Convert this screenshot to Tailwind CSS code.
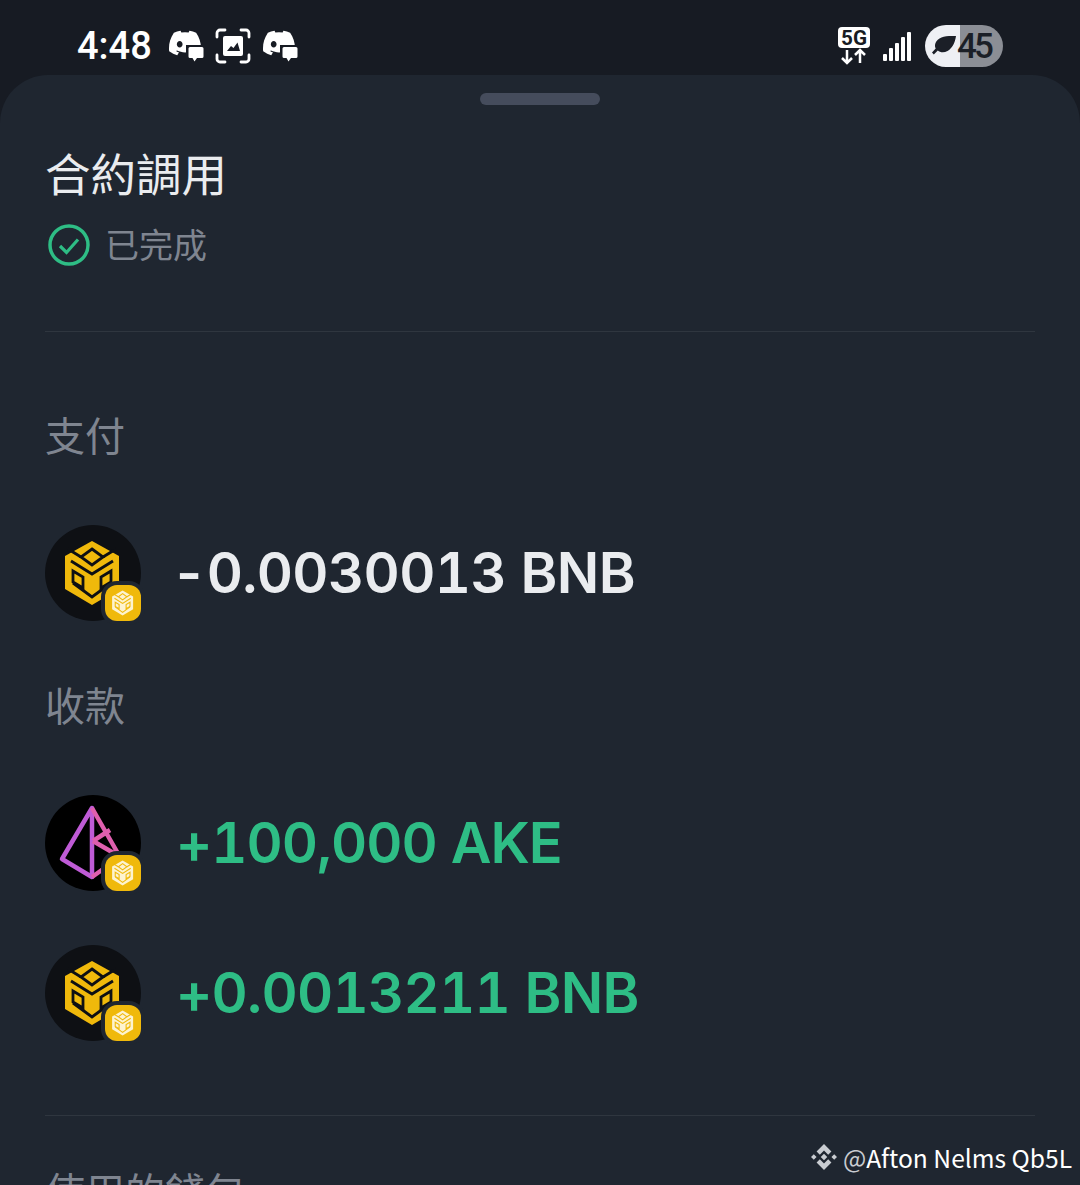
<!DOCTYPE html>
<html lang="zh-Hant">
<head>
  <meta charset="UTF-8">
  <title>合約調用</title>
  <script src="https://cdn.jsdelivr.net/npm/@tailwindcss/browser@4"></script>
</head>
<body class="bg-[#171b23] font-['Inter','Noto_Sans_CJK_TC',sans-serif]">
  <!-- shared icons -->
  <svg class="hidden">
    <symbol id="bnb" viewBox="0 0 66 72">
      <path fill="currentColor" d="M32 4 59 19V52L32 68 5 52V19Z"/>
      <g fill="none" stroke="var(--line)" stroke-width="2.800">
        <path d="M32 12 43 20 32 28 21 20Z"/>
        <path d="M11 24 32 37 53 24"/>
        <path d="M21 20 8 12M43 20 56 12"/>
        <path d="M13 34 23 40V51L13 45Z"/>
        <path d="M51 34 41 40V51L51 45Z"/>
        <path d="M13 46 32 60 51 46"/>
      </g>
    </symbol>
    <symbol id="discord" viewBox="0 0 35 32">
      <svg x="0" y="-3" width="32" height="32" viewBox="0 0 24 24"><path fill="currentColor" d="M20.317 4.37a19.79 19.79 0 0 0-4.885-1.515.07.07 0 0 0-.079.037c-.211.375-.445.865-.608 1.25a18.27 18.27 0 0 0-5.487 0 12.640 12.640 0 0 0-.618-1.25.08.08 0 0 0-.079-.037A19.740 19.740 0 0 0 3.677 4.370a.07.07 0 0 0-.032.028C.533 9.046-.319 13.580.099 18.058a.08.08 0 0 0 .031.056c2.053 1.508 4.041 2.423 5.993 3.030a.08.08 0 0 0 .084-.028c.462-.630.873-1.295 1.226-1.994a.08.08 0 0 0-.042-.106c-.653-.248-1.274-.550-1.872-.892a.08.08 0 0 1-.008-.128c.126-.094.252-.192.372-.291a.07.07 0 0 1 .078-.011c3.928 1.793 8.180 1.793 12.061 0a.07.07 0 0 1 .079.010c.120.099.246.198.373.292a.08.08 0 0 1-.007.128c-.598.350-1.219.645-1.873.891a.08.08 0 0 0-.041.107c.360.698.772 1.363 1.225 1.993a.08.08 0 0 0 .084.029c1.961-.607 3.950-1.522 6.002-3.030a.08.08 0 0 0 .032-.055c.500-5.177-.838-9.674-3.549-13.660a.06.06 0 0 0-.031-.029ZM8.020 15.331c-1.183 0-2.157-1.086-2.157-2.419s.956-2.419 2.157-2.419c1.211 0 2.176 1.095 2.157 2.419 0 1.333-.956 2.419-2.157 2.419Z"/></svg>
      <path fill="#171b23" d="M17 15h18v17H17z"/>
      <path fill="currentColor" d="M21 17h12a1.500 1.500 0 0 1 1.500 1.500v8a1.500 1.500 0 0 1-1.500 1.500h-5l-2.500 3.500-2-3.500H21a1.500 1.500 0 0 1-1.500-1.500v-8A1.500 1.500 0 0 1 21 17Z"/>
    </symbol>
  </svg>

  <div class="relative h-[1185px] w-[1080px] overflow-hidden">
    <!-- status bar -->
    <div class="flex h-[75px] items-center pl-[77px] pr-[77px] pt-[17px] text-white">
      <span class="w-[92px] text-[38px] font-medium leading-none font-['Roboto',sans-serif]">4:48</span>
      <svg class="h-[32px] w-[35px]"><use href="#discord"/></svg>
      <svg class="ml-[11px] h-[36px] w-[36px]" viewBox="0 0 36 36" fill="none" stroke="currentColor" stroke-width="2.800" stroke-linecap="round">
        <path d="M2 9V5a3 3 0 0 1 3-3h5M26 2h5a3 3 0 0 1 3 3v4M34 27v4a3 3 0 0 1-3 3h-5M10 34H5a3 3 0 0 1-3-3v-4"/>
        <path fill="currentColor" stroke="none" d="M10 8h16a2 2 0 0 1 2 2v16a2 2 0 0 1-2 2H10a2 2 0 0 1-2-2V10a2 2 0 0 1 2-2Z"/>
        <path fill="#171b23" stroke="none" d="M12 23l4-5 2.500 2 4-5.500 2.500 8.500Z"/>
      </svg>
      <svg class="ml-[12px] h-[32px] w-[35px]"><use href="#discord"/></svg>

      <svg class="ml-auto h-[38px] w-[34px]" viewBox="0 0 34 38">
        <rect x="1" y="0" width="32" height="21" rx="4" fill="#fff"/>
        <text x="17" y="18" text-anchor="middle" font-size="21" font-weight="700" fill="#171b23" font-family="Roboto, sans-serif" textLength="26" lengthAdjust="spacingAndGlyphs">5G</text>
        <path fill="none" stroke="#fff" stroke-width="2.500" d="M10 23v13M5 31l5 5 5-5M23 36V23M18 28l5-5 5 5"/>
      </svg>
      <div class="ml-[12px] flex h-[30px] items-end gap-[2px]">
        <i class="h-[7px] w-[4px] rounded-[1px] bg-white"></i>
        <i class="h-[13px] w-[4px] rounded-[1px] bg-white"></i>
        <i class="h-[18px] w-[4px] rounded-[1px] bg-white"></i>
        <i class="h-[24px] w-[4px] rounded-[1px] bg-white"></i>
        <i class="h-[29px] w-[4px] rounded-[1px] bg-white"></i>
      </div>
      <div class="ml-[14px] flex h-[42px] w-[78px] overflow-hidden rounded-full">
        <div class="flex w-[35px] items-center justify-end bg-[#eef0f4] pr-[4px]">
          <svg class="h-[22px] w-[24px] text-[#1b1f27]" viewBox="0 0 24 22" fill="currentColor">
            <path d="M24 1C14 .500 6 1.500 3.500 8c-.8 2.200-.6 4 .2 5.500L0 17.500 1.800 19.500l4-4C8 17.500 12 18 15.500 16 20 13.500 23 8 24 1Z"/>
          </svg>
        </div>
        <div class="flex flex-1 items-center bg-[#8b8e95] text-[35px] font-medium leading-none tracking-[-3px] text-[#1b1f27] font-['Roboto',sans-serif]"><span class="-ml-[3px]">45</span></div>
      </div>
    </div>

    <!-- sheet -->
    <div class="h-[1110px] rounded-t-[48px] bg-[#1f2630] px-[45px]">
      <div class="mx-auto h-[12px] w-[120px] translate-y-[18px] rounded-full bg-[#454c5c]"></div>
      <h1 class="mt-[67px] text-[45.5px] leading-[44px] font-normal text-[#eaecef]">合約調用</h1>
      <div class="mt-[25px] flex h-[44px] items-center pl-[3px]">
        <svg class="h-[42px] w-[42px] text-[#2ebd85]" viewBox="0 0 42 42" fill="none" stroke="currentColor" stroke-width="3.500">
          <circle cx="21" cy="21" r="19"/>
          <path stroke-width="3.200" d="M12 22l6.500 6.500L30 15.500"/>
        </svg>
        <span class="ml-[15px] text-[34px] text-[#7f8590]">已完成</span>
      </div>
      <div class="mt-[64px] h-px bg-[#2f363f]"></div>

      <h2 class="mt-[82px] text-[40px] leading-[46px] text-[#7f8590]">支付</h2>
      <div class="mt-[65px] flex items-center">
        <div class="relative h-[96px] w-[96px] rounded-full bg-[#0e1014]">
          <svg class="absolute left-[15px] top-[12px] h-[72px] w-[66px] text-[#f0b90b] [--line:#0e1014]"><use href="#bnb"/></svg>
          <div class="absolute -bottom-[4px] -right-[4px] flex h-[44px] w-[44px] items-center justify-center rounded-[16px] bg-[#1f2630]">
            <div class="flex h-[36px] w-[36px] items-center justify-center rounded-[12px] bg-[#f0b90b]">
              <svg class="h-[28px] w-[26px] text-[#fdf3d0] [--line:#f0b90b]"><use href="#bnb"/></svg>
            </div>
          </div>
        </div>
        <span class="ml-[30px] text-[56px] font-semibold leading-none tabular-nums tracking-[-0.6px] text-[#eaecef]">-0.0030013 BNB</span>
      </div>

      <h2 class="mt-[63px] text-[40px] leading-[46px] text-[#7f8590]">收款</h2>
      <div class="mt-[65px] flex items-center">
        <div class="relative h-[96px] w-[96px] rounded-full bg-black">
          <svg class="h-[96px] w-[96px]" viewBox="0 0 96 96" fill="none" stroke-width="4.500" stroke-linejoin="round">
            <path stroke="#bf5bd6" d="M17 64 47 13 47 82Z"/>
            <path stroke="#df5fae" d="M47 13 75 62M47 82 75 62M48 46 65 35M48 46 72 60"/>
          </svg>
          <div class="absolute -bottom-[4px] -right-[4px] flex h-[44px] w-[44px] items-center justify-center rounded-[16px] bg-[#1f2630]">
            <div class="flex h-[36px] w-[36px] items-center justify-center rounded-[12px] bg-[#f0b90b]">
              <svg class="h-[28px] w-[26px] text-[#fdf3d0] [--line:#f0b90b]"><use href="#bnb"/></svg>
            </div>
          </div>
        </div>
        <span class="ml-[35px] text-[56px] font-semibold leading-none tabular-nums tracking-[-1px] text-[#2ebd85]">+100,000 AKE</span>
      </div>
      <div class="mt-[54px] flex items-center">
        <div class="relative h-[96px] w-[96px] rounded-full bg-[#0e1014]">
          <svg class="absolute left-[15px] top-[12px] h-[72px] w-[66px] text-[#f0b90b] [--line:#0e1014]"><use href="#bnb"/></svg>
          <div class="absolute -bottom-[4px] -right-[4px] flex h-[44px] w-[44px] items-center justify-center rounded-[16px] bg-[#1f2630]">
            <div class="flex h-[36px] w-[36px] items-center justify-center rounded-[12px] bg-[#f0b90b]">
              <svg class="h-[28px] w-[26px] text-[#fdf3d0] [--line:#f0b90b]"><use href="#bnb"/></svg>
            </div>
          </div>
        </div>
        <span class="ml-[35px] text-[56px] font-semibold leading-none tabular-nums tracking-[-0.7px] text-[#2ebd85]">+0.0013211 BNB</span>
      </div>
      <div class="mt-[74px] h-px bg-[#2f363f]"></div>
      <h2 class="mt-[54px] text-[40px] leading-[46px] text-[#7f8590]">使用的錢包</h2>
    </div>

    <!-- watermark -->
    <div class="absolute bottom-[11px] right-[8px] flex items-center text-[24.600px] leading-[34px] text-white font-['Noto_Sans_CJK_TC',sans-serif]">
      <svg class="h-[26px] w-[26px] text-[#c9ccd1]" viewBox="0 0 28 28" fill="currentColor">
        <path d="M14 0l8 8-3.500 3.500L14 7l-4.500 4.500L6 8ZM14 28l-8-8 3.500-3.500L14 21l4.500-4.500L22 20ZM3 11l3 3-3 3-3-3ZM25 11l3 3-3 3-3-3ZM14 10.500 17.500 14 14 17.500 10.500 14Z"/>
      </svg>
      <span class="ml-[6px] text-[#c9ccd1]">@</span>
      <span class="ml-[0px]">Afton Nelms Qb5L</span>
    </div>
  </div>
</body>
</html>
